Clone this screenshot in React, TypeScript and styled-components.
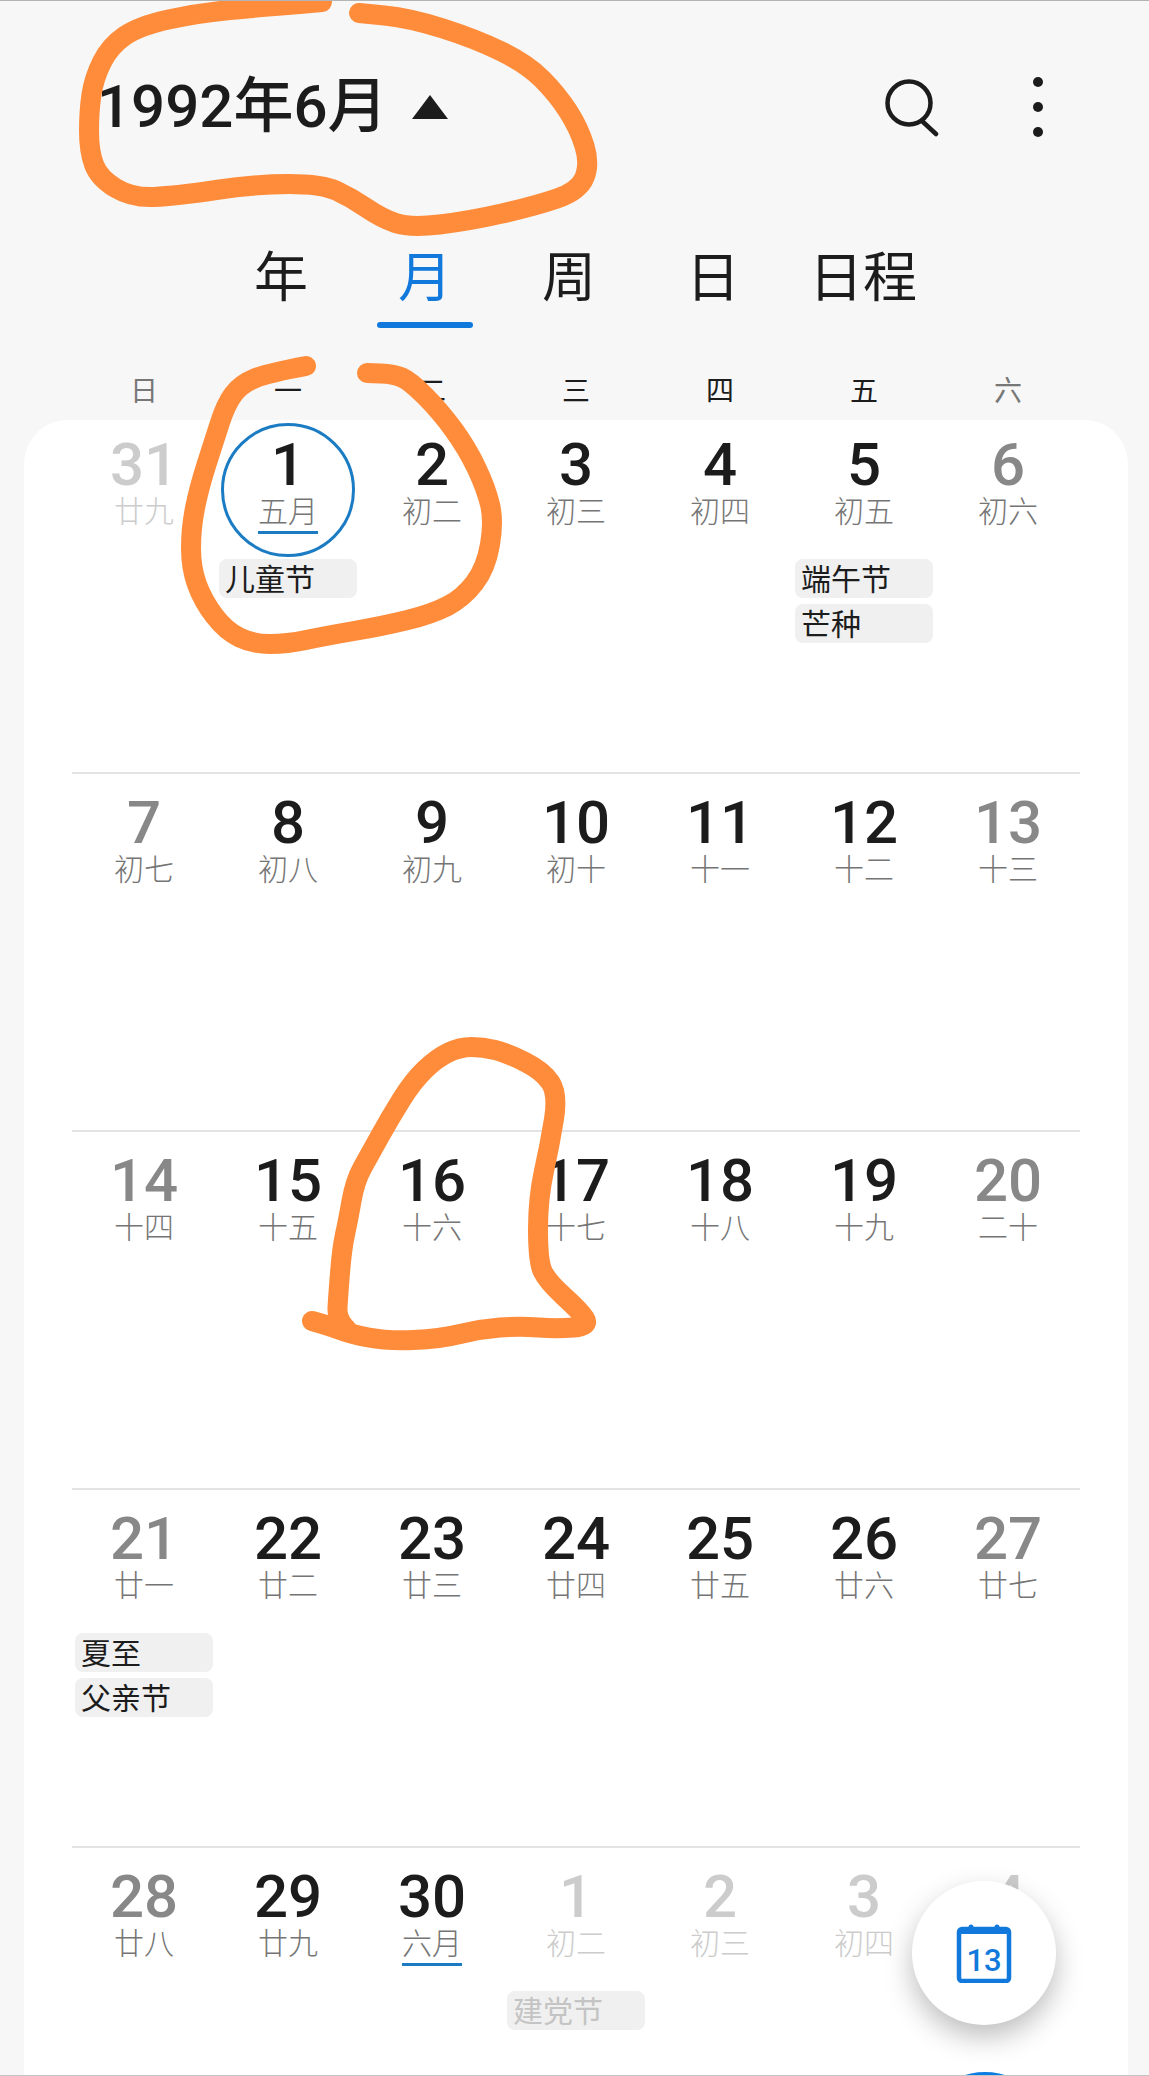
import React from 'react';
import styled, {createGlobalStyle} from 'styled-components';

const FONT = `Roboto, "Noto Sans CJK SC", sans-serif`;
const BLUE = '#1279dc';
const RING = '#1b7cc4';
const INK = '#1c1c1c';
const MARKER = '#ff8c3a';

type Tone = 'normal' | 'weekend' | 'faded';

interface Day {
    day: number;
    lunar: string;
    tone: Tone;
    today?: boolean;
    monthMark?: boolean;
    tags?: string[];
}

const d = (day: number, lunar: string, tone: Tone = 'normal', extra: Partial<Day> = {}): Day => ({day, lunar, tone, ...extra});

const WEEKDAYS = ['日', '一', '二', '三', '四', '五', '六'];
const TABS = ['年', '月', '周', '日', '日程'];

const WEEKS: Day[][] = [
    [
        d(31, '廿九', 'faded'),
        d(1, '五月', 'normal', {today: true, monthMark: true, tags: ['儿童节']}),
        d(2, '初二'),
        d(3, '初三'),
        d(4, '初四'),
        d(5, '初五', 'normal', {tags: ['端午节', '芒种']}),
        d(6, '初六', 'weekend'),
    ],
    [
        d(7, '初七', 'weekend'),
        d(8, '初八'),
        d(9, '初九'),
        d(10, '初十'),
        d(11, '十一'),
        d(12, '十二'),
        d(13, '十三', 'weekend'),
    ],
    [
        d(14, '十四', 'weekend'),
        d(15, '十五'),
        d(16, '十六'),
        d(17, '十七'),
        d(18, '十八'),
        d(19, '十九'),
        d(20, '二十', 'weekend'),
    ],
    [
        d(21, '廿一', 'weekend', {tags: ['夏至', '父亲节']}),
        d(22, '廿二'),
        d(23, '廿三'),
        d(24, '廿四'),
        d(25, '廿五'),
        d(26, '廿六'),
        d(27, '廿七', 'weekend'),
    ],
    [
        d(28, '廿八', 'weekend'),
        d(29, '廿九'),
        d(30, '六月', 'normal', {monthMark: true}),
        d(1, '初二', 'faded', {tags: ['建党节']}),
        d(2, '初三', 'faded'),
        d(3, '初四', 'faded'),
        d(4, '初五', 'faded'),
    ],
];

// pen strokes over the calendar, in page coordinates
const STROKES: [number, number][][] = [
    [[322, 1], [262, 6], [198, 12], [139, 25], [110, 45], [94, 77], [89, 110], [89, 150], [99, 177], [132, 197], [176, 195], [256, 183], [322, 183], [352, 197], [381, 217], [410, 227], [469, 220], [535, 205], [579, 190], [590, 163], [579, 127], [557, 93], [527, 63], [476, 38], [410, 17], [359, 12]],
    [[306, 365], [268, 372], [241, 383], [226, 403], [214, 440], [199, 487], [191, 527], [191, 567], [203, 600], [226, 630], [253, 643], [287, 643], [325, 635], [383, 625], [432, 613], [463, 597], [486, 567], [494, 520], [486, 487], [467, 447], [440, 410], [410, 380], [394, 373], [367, 372]],
    [[312, 1320], [330, 1325], [350, 1333], [387, 1340], [440, 1338], [480, 1328], [520, 1325], [557, 1328], [590, 1325], [580, 1310], [547, 1280], [538, 1260], [538, 1197], [550, 1143], [558, 1093], [543, 1070], [507, 1052], [483, 1046], [460, 1046], [437, 1057], [413, 1080], [390, 1117], [370, 1153], [355, 1180], [348, 1220], [342, 1247], [338, 1297], [337, 1317], [350, 1332]],
];

const smoothPath = (points: [number, number][]) => {
    let path = `M${points[0][0]} ${points[0][1]}`;
    for (let i = 1; i < points.length - 1; i++) {
        const [x, y] = points[i];
        const [nx, ny] = points[i + 1];
        path += ` Q${x} ${y} ${(x + nx) / 2} ${(y + ny) / 2}`;
    }
    const [lx, ly] = points[points.length - 1];
    return `${path} L${lx} ${ly}`;
};

const GlobalStyle = createGlobalStyle`
  html, body {
    margin: 0;
    padding: 0;
    background: #f7f7f7;
  }
`;

const Page = styled.div`
  position: relative;
  display: flex;
  flex-direction: column;
  box-sizing: border-box;
  width: 1149px;
  height: 2076px;
  overflow: hidden;

  background: #f7f7f7;
  border-top: 1px solid #b4b4b4;

  font-family: ${FONT};
  color: ${INK};
`;

const Header = styled.header`
  display: flex;
  align-items: center;
  justify-content: space-between;
  flex-shrink: 0;
  box-sizing: border-box;
  height: 211px;
  padding: 0 104px 0 97px;
`;

const TitleGroup = styled.div`
  display: flex;
  align-items: center;
  gap: 24px;
`;

const Title = styled.h1`
  margin: 0;
  font-size: 60px;
  line-height: 70px;
  font-weight: 500;
`;

const Actions = styled.div`
  display: flex;
  align-items: center;
  gap: 89px;
`;

const Tabs = styled.nav`
  display: flex;
  flex-shrink: 0;
  gap: 90px;
  height: 77px;
  padding: 32px 0 0 254px;
`;

const Tab = styled.div<{$active?: boolean; $wide?: boolean}>`
  position: relative;
  font-size: 54px;
  line-height: 70px;
  margin-left: ${p => (p.$wide ? -21 : 0)}px;
  color: ${p => (p.$active ? BLUE : INK)};

  ${p => p.$active && `
    &::after {
      content: '';
      position: absolute;
      left: -21px;
      right: -21px;
      top: 78px;
      height: 6px;
      border-radius: 3px;
      background: ${BLUE};
    }
  `}
`;

const Weekdays = styled.div`
  display: grid;
  grid-template-columns: repeat(7, 144px);
  flex-shrink: 0;
  height: 99px;
  padding: 53px 0 0 72px;
  box-sizing: border-box;
`;

const Weekday = styled.div<{$weekend?: boolean}>`
  text-align: center;
  font-size: 28px;
  line-height: 36px;
  color: ${p => (p.$weekend ? '#777' : INK)};
`;

const Card = styled.main`
  flex: 1;
  margin: 0 21px 0 24px;
  padding: 0 48px;
  background: #fff;
  border-radius: 44px 44px 0 0;
`;

const Week = styled.div<{$first?: boolean}>`
  display: grid;
  grid-template-columns: repeat(7, 144px);
  box-sizing: border-box;
  height: ${p => (p.$first ? 352 : 358)}px;
  padding-top: ${p => (p.$first ? 15 : 19)}px;
  border-top: ${p => (p.$first ? 'none' : '2px solid #e3e3e3')};
`;

const Cell = styled.div`
  position: relative;
  display: flex;
  flex-direction: column;
  align-items: center;
`;

const dayColor = {normal: INK, weekend: '#888', faded: '#ccc'};
const lunarColor = {normal: '#757575', weekend: '#757575', faded: '#ccc'};

const DayNumber = styled.div<{$tone: Tone}>`
  font-size: 60px;
  line-height: 60px;
  font-weight: 500;
  color: ${p => dayColor[p.$tone]};
`;

const Lunar = styled.div<{$tone: Tone; $marked?: boolean}>`
  box-sizing: border-box;
  display: flex;
  justify-content: center;
  width: 60px;
  height: 39px;
  white-space: nowrap;
  font-size: 30px;
  line-height: 33px;
  font-weight: 300;
  color: ${p => lunarColor[p.$tone]};
  border-bottom: 3px solid ${p => (p.$marked ? RING : 'transparent')};
`;

const TodayRing = styled.div`
  position: absolute;
  top: -12px;
  left: 5px;
  box-sizing: border-box;
  width: 134px;
  height: 134px;
  border: 3px solid ${RING};
  border-radius: 50%;
`;

const TagList = styled.div`
  display: flex;
  flex-direction: column;
  gap: 6px;
  margin-top: 25px;
`;

const Tag = styled.div<{$faded?: boolean}>`
  box-sizing: border-box;
  width: 138px;
  height: 39px;
  padding-left: 6px;
  border-radius: 8px;
  background: #f0f0f0;
  font-size: 30px;
  line-height: 42px;
  color: ${p => (p.$faded ? '#c4c4c4' : INK)};
`;

const Fab = styled.button`
  position: absolute;
  top: 1880px;
  left: 912px;
  display: flex;
  align-items: center;
  justify-content: center;
  width: 144px;
  height: 144px;
  padding: 0;
  border: none;
  border-radius: 50%;
  background: #fff;
  box-shadow: 0 12px 28px rgba(0, 0, 0, 0.26);
`;

const NextFab = styled.div`
  position: absolute;
  top: 2071px;
  left: 913px;
  width: 144px;
  height: 144px;
  border-radius: 50%;
  background: #0d7be0;
`;

const BottomEdge = styled.div`
  position: absolute;
  left: 0;
  right: 0;
  bottom: 0;
  height: 1px;
  background: #c4c4c4;
`;

const Strokes = styled.svg`
  position: absolute;
  top: 0;
  left: 0;
  pointer-events: none;
`;

const SearchIcon = () => (
    <svg width="60" height="60" viewBox="0 0 60 60" fill="none" stroke={INK} strokeWidth="4.5" strokeLinecap="round">
        <circle cx="27" cy="26" r="21.5" />
        <path d="M40 44 L54 57" />
    </svg>
);

const MoreIcon = () => (
    <svg width="14" height="62" viewBox="0 0 14 62" fill={INK}>
        <circle cx="7" cy="6" r="5" />
        <circle cx="7" cy="31" r="5" />
        <circle cx="7" cy="56" r="5" />
    </svg>
);

const CalendarIcon = () => (
    <svg width="56" height="60" viewBox="0 0 56 60" fill="none">
        <rect x="3" y="6" width="50" height="52" rx="3" stroke={BLUE} strokeWidth="4.5" />
        <path d="M3 8 H53" stroke={BLUE} strokeWidth="6" />
        <circle cx="15" cy="4" r="2.5" fill={BLUE} />
        <circle cx="41" cy="4" r="2.5" fill={BLUE} />
        <text x="28" y="48" textAnchor="middle" fontFamily="Roboto, sans-serif" fontSize="31" fontWeight="500" fill={BLUE}>13</text>
    </svg>
);

const DayCell = ({item}: {item: Day}) => (
    <Cell>
        {item.today && <TodayRing />}
        <DayNumber $tone={item.tone}>{item.day}</DayNumber>
        <Lunar $tone={item.tone} $marked={item.monthMark}>{item.lunar}</Lunar>
        {item.tags && (
            <TagList>
                {item.tags.map(tag => <Tag key={tag} $faded={item.tone === 'faded'}>{tag}</Tag>)}
            </TagList>
        )}
    </Cell>
);

export default function App() {
    return (
        <Page>
            <GlobalStyle />
            <Header>
                <TitleGroup>
                    <Title>1992年6月</Title>
                    <svg width="36" height="24" viewBox="0 0 36 24" fill={INK}>
                        <path d="M18 0 L36 24 H0 Z" />
                    </svg>
                </TitleGroup>
                <Actions>
                    <SearchIcon />
                    <MoreIcon />
                </Actions>
            </Header>

            <Tabs>
                {TABS.map(tab => <Tab key={tab} $active={tab === '月'} $wide={tab.length > 1}>{tab}</Tab>)}
            </Tabs>

            <Weekdays>
                {WEEKDAYS.map((name, i) => <Weekday key={name} $weekend={i === 0 || i === 6}>{name}</Weekday>)}
            </Weekdays>

            <Card>
                {WEEKS.map((week, i) => (
                    <Week key={i} $first={i === 0}>
                        {week.map((item, j) => <DayCell key={j} item={item} />)}
                    </Week>
                ))}
            </Card>

            <NextFab />
            <BottomEdge />
            <Fab><CalendarIcon /></Fab>

            <Strokes width="1149" height="2076" viewBox="0 0 1149 2076" fill="none" stroke={MARKER} strokeWidth="20" strokeLinecap="round" strokeLinejoin="round">
                {STROKES.map((points, i) => <path key={i} d={smoothPath(points)} />)}
            </Strokes>
        </Page>
    );
}
